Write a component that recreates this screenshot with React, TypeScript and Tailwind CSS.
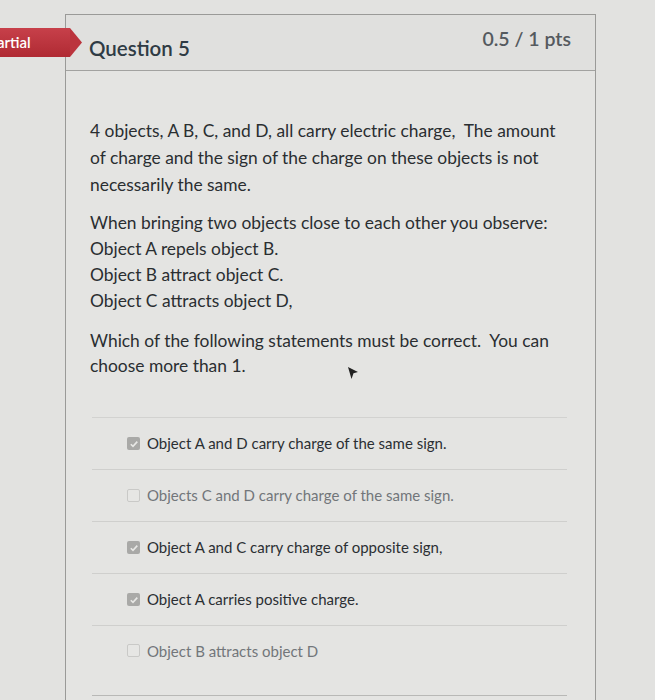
import React from "react";

const answers = [
  { text: "Object A and D carry charge of the same sign.", checked: true },
  { text: "Objects C and D carry charge of the same sign.", checked: false },
  { text: "Object A and C carry charge of opposite sign,", checked: true },
  { text: "Object A carries positive charge.", checked: true },
  { text: "Object B attracts object D", checked: false },
];

function Box({ checked }: { checked: boolean }) {
  if (checked) {
    return (
      <span className="w-[13px] h-[13px] rounded-[2px] bg-[#a9a9a7] flex items-center justify-center shrink-0">
        <svg width="10" height="10" viewBox="0 0 10 10">
          <path d="M1.8 5.2 L4 7.4 L8.3 2.6" stroke="#e8e8e6" strokeWidth="1.6" fill="none" />
        </svg>
      </span>
    );
  }
  return <span className="block w-[13px] h-[13px] rounded-[2px] border border-[#c9c9c7] bg-[#e6e6e4] shrink-0" />;
}

export default function App() {
  return (
    <div
      className="w-[655px] h-[700px] overflow-hidden bg-[#e2e2e0] relative"
      style={{ fontFamily: "Lato, 'Noto Sans', sans-serif" }}
    >
      <div className="pt-[14px] pl-[65px] w-[596px]">
        <div className="border border-[#9a9a98] h-[700px] bg-[#e4e4e2]">
          <div className="h-[56px] border-b border-[#a2a2a0] bg-[#e0e0de] flex items-start justify-between pl-[23px] pr-[24px]">
            <div className="text-[20.5px] font-semibold text-[#2f3b44] mt-[20px] leading-[26px]">Question 5</div>
            <div className="text-[19.5px] font-semibold text-[#555a5e] mt-[12px] leading-[24px]">0.5 / 1 pts</div>
          </div>
          <div className="pl-[24px] pr-[28px] pt-[46px] text-[17.4px] text-[#2a2e31] leading-[27px]">
            <p className="w-[480px]">
              4 objects, A B, C, and D, all carry electric charge,&nbsp; The amount of charge and the sign of the charge on these objects is not necessarily the same.
            </p>
            <div className="mt-[12px] leading-[26px]">
              <p>When bringing two objects close to each other you observe:</p>
              <p>Object A repels object B.</p>
              <p>Object B attract object C.</p>
              <p>Object C attracts object D,</p>
            </div>
            <p className="mt-[14px] leading-[25px] w-[475px]">
              Which of the following statements must be correct.&nbsp; You can choose more than 1.
            </p>
          </div>
          <div className="ml-[26px] w-[475px] mt-[39px] border-t border-[#d2d2d0]">
            {answers.map((a, i) => (
              <div
                key={i}
                className={
                  i === answers.length - 1
                    ? "h-[70px] border-b border-[#b8b8b6] flex items-start pt-[14px] pl-[35px] gap-[7px]"
                    : "h-[52px] border-b border-[#cfcfcd] flex items-center pl-[35px] gap-[7px]"
                }
              >
                <span className={i === answers.length - 1 ? "flex shrink-0 mt-[4px]" : "flex shrink-0"}>
                  <Box checked={a.checked} />
                </span>
                <span className={`text-[15px] ${a.checked ? "text-[#2b2f33]" : "text-[#72767a]"}`}>{a.text}</span>
              </div>
            ))}
          </div>
        </div>
      </div>
      <div className="absolute left-0 top-[28px] h-[29px] w-[70px] bg-gradient-to-b from-[#c7404a] to-[#b02a33] flex items-center pl-[1px]">
        <span className="text-white text-[15px] font-semibold leading-none -ml-[4px]">artial</span>
      </div>
      <svg className="absolute left-[70px] top-[28px]" width="12" height="29" viewBox="0 0 12 29">
        <polygon points="0,0 12,14.5 0,29" fill="#bb343d" />
      </svg>
      <svg className="absolute left-[347px] top-[366px]" width="12" height="14" viewBox="0 0 12 14">
        <path d="M1 1 L11 6 L6.5 7.3 L4.5 13 Z" fill="#222" />
      </svg>
    </div>
  );
}
